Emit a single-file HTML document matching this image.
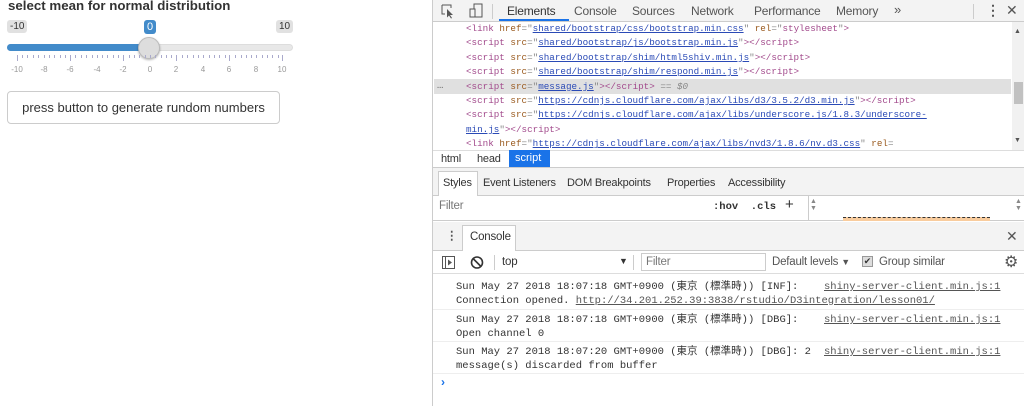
<!DOCTYPE html>
<html><head><meta charset="utf-8"><style>
*{margin:0;padding:0;box-sizing:border-box}
body{width:1024px;height:406px;background:#fff;position:relative;overflow:hidden;font-family:"Liberation Sans",sans-serif}
.a{position:absolute;white-space:nowrap}
.m{font-family:"Liberation Mono","Noto Sans CJK JP",monospace;font-size:10.5px}
.c{font-family:"Liberation Mono",monospace;font-size:9.25px}
.tg{color:#a24a8c}.at{color:#9a5a1e}.av{color:#2a2ab0}.u{color:#2a4ab6;text-decoration:underline}
.ui{font-size:11.5px;color:#333;letter-spacing:-0.2px}
</style></head><body>
<!-- left -->
<div class="a" style="left:8px;top:-2px;font-weight:bold;font-size:13.3px;color:#333">select mean for normal distribution</div>
<div class="a" style="left:7px;top:20px;background:#e1e1e1;color:#333;font-size:10px;padding:1px 3px;border-radius:3px">-10</div>
<div class="a" style="left:144px;top:20px;background:#428bca;color:#fff;font-size:11px;padding:1px 3px;border-radius:3px">0</div>
<div class="a" style="left:276px;top:20px;background:#e1e1e1;color:#333;font-size:10px;padding:1px 3px;border-radius:3px">10</div>
<div class="a" style="left:7px;top:44px;width:286px;height:7px;background:#e8e8e8;border-radius:4px;border:1px solid #ddd"></div>
<div class="a" style="left:7px;top:44px;width:143px;height:7px;background:#428bca;border-radius:4px 0 0 4px"></div>
<div class="a" style="left:138px;top:37px;width:22px;height:22px;border-radius:50%;background:#ddd;border:1px solid #bbb;box-shadow:0 1px 2px rgba(0,0,0,.3)"></div>
<svg class="a" style="left:0;top:55px" width="300" height="22">
<g stroke="#aac" stroke-width="1">
<path d="M17.5 0v6M44.5 0v3M70.5 0v6M97.5 0v3M123.5 0v6M150.5 0v3M176.5 0v6M203.5 0v3M229.5 0v6M256.5 0v3M282.5 0v6"/>
<path d="M22.5 0v3M27.5 0v3M33.5 0v3M38.5 0v3M49.5 0v3M54.5 0v3M60.5 0v3M65.5 0v3M75.5 0v3M81.5 0v3M86.5 0v3M92.5 0v3M102.5 0v3M107.5 0v3M113.5 0v3M118.5 0v3M129.5 0v3M134.5 0v3M139.5 0v3M145.5 0v3M155.5 0v3M161.5 0v3M166.5 0v3M171.5 0v3M182.5 0v3M187.5 0v3M193.5 0v3M198.5 0v3M209.5 0v3M214.5 0v3M219.5 0v3M225.5 0v3M235.5 0v3M241.5 0v3M246.5 0v3M251.5 0v3M262.5 0v3M267.5 0v3M272.5 0v3M278.5 0v3"/>
</g>
<g fill="#999" font-size="8" font-family="Liberation Sans" text-anchor="middle">
<text x="17" y="17">-10</text><text x="44" y="17">-8</text><text x="70" y="17">-6</text><text x="97" y="17">-4</text><text x="123" y="17">-2</text><text x="150" y="17">0</text><text x="176" y="17">2</text><text x="203" y="17">4</text><text x="229" y="17">6</text><text x="256" y="17">8</text><text x="282" y="17">10</text></g></svg>
<div class="a" style="left:7px;top:91px;width:273px;height:33px;border:1px solid #ccc;border-radius:4px;font-size:13px;color:#333;line-height:31px;text-align:center">press button to generate rundom numbers</div>

<!-- devtools -->
<div class="a" style="left:432px;top:0;width:592px;height:406px;border-left:1px solid #ccc"></div>
<div class="a" style="left:433px;top:0;width:591px;height:22px;background:#f3f3f3;border-bottom:1px solid #ccc"></div>
<svg class="a" style="left:440px;top:3px" width="50" height="16"><path d="M2 2h9v3M2 2v9h3" fill="none" stroke="#555"/><path d="M7 6l6 6-3 0 2 3-1 .5-2-3-2 2z" fill="#555"/><rect x="34" y="1" width="8" height="13" fill="none" stroke="#555"/><rect x="30" y="6" width="5" height="8" fill="#f3f3f3" stroke="#555"/></svg>
<div class="a" style="left:492px;top:4px;width:1px;height:15px;background:#ccc"></div>
<div class="a ui" style="left:507px;top:4px;font-size:12px">Elements</div>
<div class="a" style="left:499px;top:19px;width:70px;height:2px;background:#1a73e8"></div>
<div class="a ui" style="left:574px;top:4px;font-size:12px;color:#555">Console</div>
<div class="a ui" style="left:632px;top:4px;font-size:12px;color:#555">Sources</div>
<div class="a ui" style="left:691px;top:4px;font-size:12px;color:#555">Network</div>
<div class="a ui" style="left:754px;top:4px;font-size:12px;color:#555">Performance</div>
<div class="a ui" style="left:836px;top:4px;font-size:12px;color:#555">Memory</div>
<div class="a ui" style="left:894px;top:2px;font-size:13px;color:#555">»</div>
<div class="a" style="left:973px;top:4px;width:1px;height:15px;background:#ccc"></div>
<div class="a ui" style="left:986px;top:2px;font-size:14px;color:#555;font-weight:bold">⋮</div>
<div class="a ui" style="left:1006px;top:2px;font-size:14px;color:#555">✕</div>

<div class="a" style="left:434px;top:79px;width:577px;height:15px;background:#e0e0e0"></div>
<div class="a m" style="left:437px;top:80px;color:#666">…</div>
<div class="a c" style="left:466px;top:22px;line-height:14.4px;color:#888">
<div><span class="tg">&lt;link</span> <span class="at">href</span>="<span class="u">shared/bootstrap/css/bootstrap.min.css</span>" <span class="at">rel</span>="<span class="tg">stylesheet</span>"<span class="tg">&gt;</span></div>
<div><span class="tg">&lt;script</span> <span class="at">src</span>="<span class="u">shared/bootstrap/js/bootstrap.min.js</span>"<span class="tg">&gt;&lt;/script&gt;</span></div>
<div><span class="tg">&lt;script</span> <span class="at">src</span>="<span class="u">shared/bootstrap/shim/html5shiv.min.js</span>"<span class="tg">&gt;&lt;/script&gt;</span></div>
<div><span class="tg">&lt;script</span> <span class="at">src</span>="<span class="u">shared/bootstrap/shim/respond.min.js</span>"<span class="tg">&gt;&lt;/script&gt;</span></div>
<div><span class="tg">&lt;script</span> <span class="at">src</span>="<span class="u">message.js</span>"<span class="tg">&gt;&lt;/script&gt;</span> == <i>$0</i></div>
<div><span class="tg">&lt;script</span> <span class="at">src</span>="<span class="u">https://cdnjs.cloudflare.com/ajax/libs/d3/3.5.2/d3.min.js</span>"<span class="tg">&gt;&lt;/script&gt;</span></div>
<div><span class="tg">&lt;script</span> <span class="at">src</span>="<span class="u">https://cdnjs.cloudflare.com/ajax/libs/underscore.js/1.8.3/underscore-</span></div>
<div><span class="u">min.js</span>"<span class="tg">&gt;&lt;/script&gt;</span></div>
<div><span class="tg">&lt;link</span> <span class="at">href</span>="<span class="u">https://cdnjs.cloudflare.com/ajax/libs/nvd3/1.8.6/nv.d3.css</span>" <span class="at">rel</span>=</div>
</div>
<div class="a" style="left:1012px;top:22px;width:12px;height:128px;background:#f1f1f1"></div>
<div class="a" style="left:1014px;top:82px;width:9px;height:22px;background:#c1c1c1"></div>
<div class="a" style="left:1014px;top:28px;font-size:7px;color:#555">▲</div>
<div class="a" style="left:1014px;top:137px;font-size:7px;color:#555">▼</div>

<div class="a" style="left:433px;top:150px;width:591px;height:17px;background:#fff;border-top:1px solid #ddd"></div>
<div class="a ui" style="left:441px;top:153px;font-size:11px">html</div>
<div class="a ui" style="left:477px;top:153px;font-size:11px">head</div>
<div class="a" style="left:509px;top:150px;width:41px;height:17px;background:#1a73e8;color:#fff;font-size:11px;padding:2px 6px">script</div>

<div class="a" style="left:433px;top:167px;width:591px;height:29px;background:#f3f3f3;border-top:1px solid #ccc;border-bottom:1px solid #ccc"></div>
<div class="a" style="left:438px;top:171px;width:40px;height:25px;background:#fff;border:1px solid #ccc;border-bottom:none"></div>
<div class="a ui" style="left:443px;top:177px;font-size:11px">Styles</div>
<div class="a ui" style="left:483px;top:177px;font-size:11px">Event Listeners</div>
<div class="a ui" style="left:567px;top:177px;font-size:11px">DOM Breakpoints</div>
<div class="a ui" style="left:667px;top:177px;font-size:11px">Properties</div>
<div class="a ui" style="left:728px;top:177px;font-size:11px">Accessibility</div>
<div class="a ui" style="left:439px;top:200px;color:#777">Filter</div>
<div class="a m" style="left:713px;top:201px;font-weight:bold;color:#333">:hov&nbsp;&nbsp;.cls</div>
<div class="a" style="left:785px;top:196px;font-size:15px;color:#333">+</div>
<div class="a" style="left:433px;top:220px;width:591px;height:1px;background:#ccc"></div>
<div class="a" style="left:808px;top:196px;width:1px;height:24px;background:#ccc"></div>
<div class="a" style="left:810px;top:198px;font-size:7px;color:#888">▲<br>▼</div>
<div class="a" style="left:1015px;top:198px;font-size:7px;color:#888">▲<br>▼</div>
<div class="a" style="left:843px;top:217px;width:147px;height:4px;background:#f9cc9d;border-top:1px dashed #333"></div>

<div class="a" style="left:433px;top:222px;width:591px;height:29px;background:#f3f3f3;border-bottom:1px solid #ccc"></div>
<div class="a ui" style="left:446px;top:228px;font-weight:bold;color:#555">⋮</div>
<div class="a" style="left:462px;top:225px;width:54px;height:26px;background:#fff;border:1px solid #ccc;border-bottom:none"></div>
<div class="a ui" style="left:470px;top:231px">Console</div>
<div class="a ui" style="left:1006px;top:228px;font-size:14px;color:#555">✕</div>

<div class="a" style="left:433px;top:251px;width:591px;height:23px;border-bottom:1px solid #ddd"></div>
<svg class="a" style="left:441px;top:255px" width="50" height="16"><rect x="1.5" y="1.5" width="12" height="12" fill="none" stroke="#555"/><path d="M4.5 2v11" stroke="#555"/><path d="M7 4.5l4 3-4 3z" fill="#555"/><circle cx="36" cy="7.5" r="5.5" fill="none" stroke="#333" stroke-width="1.6"/><path d="M32 3.5l8 8" stroke="#333" stroke-width="1.6"/></svg>
<div class="a" style="left:494px;top:255px;width:1px;height:15px;background:#ccc"></div>
<div class="a ui" style="left:502px;top:256px">top</div>
<div class="a" style="left:619px;top:256px;font-size:9px;color:#333">▼</div>
<div class="a" style="left:633px;top:255px;width:1px;height:15px;background:#ccc"></div>
<div class="a" style="left:641px;top:253px;width:125px;height:18px;border:1px solid #ccc"></div>
<div class="a ui" style="left:646px;top:256px;color:#777">Filter</div>
<div class="a ui" style="left:772px;top:256px;color:#555">Default levels <span style="font-size:9px">▼</span></div>
<div class="a" style="left:862px;top:256px;width:11px;height:11px;background:#ddd;border:1px solid #999;font-size:9px;line-height:9px;text-align:center;color:#333">✔</div>
<div class="a ui" style="left:879px;top:256px;color:#555">Group similar</div>
<div class="a" style="left:1004px;top:252px;font-size:16px;color:#555">⚙</div>

<div class="a m" style="left:456px;top:281px;line-height:13.8px;color:#333">Sun May 27 2018 18:07:18 GMT+0900 (東京 (標準時)) [INF]:<br>Connection opened. <span style="text-decoration:underline;color:#555">http://34.201.252.39:3838/rstudio/D3integration/lesson01/</span></div>
<div class="a m" style="left:824px;top:281px;text-decoration:underline;color:#555">shiny-server-client.min.js:1</div>
<div class="a" style="left:433px;top:309px;width:591px;height:1px;background:#eee"></div>
<div class="a m" style="left:456px;top:314px;line-height:13.8px;color:#333">Sun May 27 2018 18:07:18 GMT+0900 (東京 (標準時)) [DBG]:<br>Open channel 0</div>
<div class="a m" style="left:824px;top:314px;text-decoration:underline;color:#555">shiny-server-client.min.js:1</div>
<div class="a" style="left:433px;top:341px;width:591px;height:1px;background:#eee"></div>
<div class="a m" style="left:456px;top:346px;line-height:13.8px;color:#333">Sun May 27 2018 18:07:20 GMT+0900 (東京 (標準時)) [DBG]: 2<br>message(s) discarded from buffer</div>
<div class="a m" style="left:824px;top:346px;text-decoration:underline;color:#555">shiny-server-client.min.js:1</div>
<div class="a" style="left:433px;top:373px;width:591px;height:1px;background:#eee"></div>
<div class="a" style="left:441px;top:375px;font-size:12px;color:#1a73e8;font-weight:bold">›</div>
</body></html>
